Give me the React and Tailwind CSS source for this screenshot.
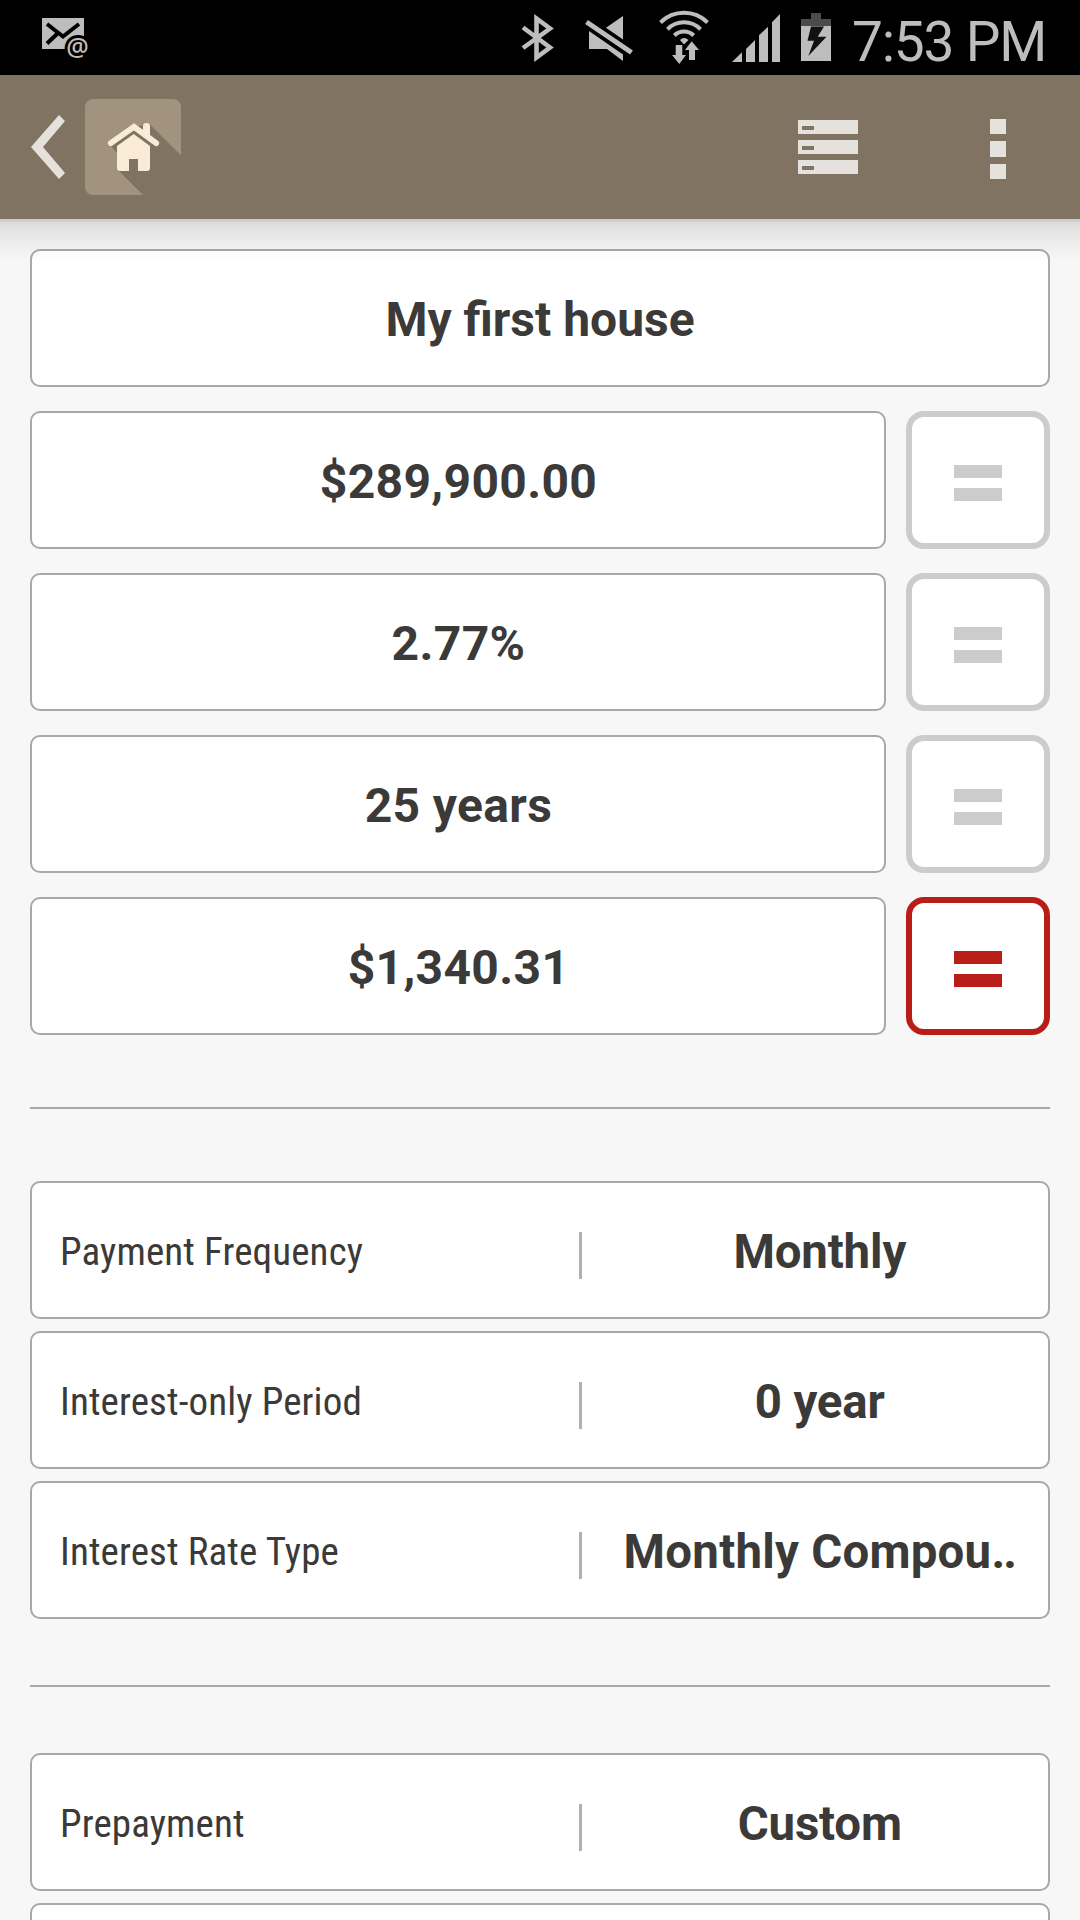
import React from 'react'

const loanFields = [
  { value: '$289,900.00', active: false },
  { value: '2.77%', active: false },
  { value: '25 years', active: false },
  { value: '$1,340.31', active: true },
]

const paymentOptions = [
  { label: 'Payment Frequency', value: 'Monthly' },
  { label: 'Interest-only Period', value: '0 year' },
  { label: 'Interest Rate Type', value: 'Monthly Compou', cut: true },
]

const extraOptions = [
  { label: 'Prepayment', value: 'Custom' },
  { label: '', value: '' },
]

const MailIcon = () => (
  <svg className="w-12 h-[75px]" viewBox="42 0 48 75">
    <rect x="42" y="18" width="42" height="31" fill="#bdbdbd" />
    <path d="M47 24L63 36.5L79 24M47 43.5L57 34" fill="none" stroke="#000" strokeWidth="4" />
    <text x="77.5" y="55.5" textAnchor="middle" fontSize="25" fontFamily="Noto Sans" fontWeight="500" fill="#bdbdbd" stroke="#000" strokeWidth="6" paintOrder="stroke">@</text>
  </svg>
)

const BluetoothIcon = () => (
  <svg className="w-[35px] h-[75px]" viewBox="520 0 35 75">
    <path d="M523 27.5L550 47.5L536.5 57.5V18.5L550 28.5L523 48" fill="none" stroke="#bdbdbd" strokeWidth="4.6" />
  </svg>
)

const MuteIcon = () => (
  <svg className="w-[50px] h-[75px]" viewBox="584 0 50 75" fill="#bdbdbd">
    <path d="M623 16V39.5L606 27.7ZM589 31L623 54.5V61L607 49H589Z" />
    <path d="M586.5 22L631.5 52.5" stroke="#bdbdbd" strokeWidth="5" />
  </svg>
)

const WifiIcon = () => (
  <svg className="w-[52px] h-[75px]" viewBox="658 0 52 75">
    <g fill="none" stroke="#bdbdbd" strokeWidth="4">
      <path d="M660.5 22.5A33 33 0 0 1 707.5 22.5" />
      <path d="M667.5 29.3A23 23 0 0 1 700.5 29.3" />
      <path d="M674.3 35.5A13.7 13.7 0 0 1 693.7 35.5" />
    </g>
    <path d="M680 40Q684 36 688.5 40L684 44.5Z" fill="#bdbdbd" />
    <path d="M675.7 45H682.3V55H686L679.3 64L672 55H675.7ZM689 60H695V50H699L691.7 41.3L685 50H689Z" fill="#bdbdbd" />
  </svg>
)

const SignalIcon = () => (
  <svg className="w-[49px] h-[75px]" viewBox="732 0 49 75" fill="#bdbdbd">
    <path d="M732 62L742 52.3V62ZM746 49L755 40V62H746ZM759 35.3L768 26.7V62H759ZM772 22.3L780 14V62H772Z" />
  </svg>
)

const BatteryIcon = () => (
  <svg className="w-[30px] h-[75px]" viewBox="801 0 30 75">
    <path d="M811 13H821V19H831V26H801V19H811Z" fill="#4b4b4b" />
    <rect x="801" y="26" width="30" height="35" fill="#bdbdbd" />
    <path d="M811 26.5H824L817.7 36.8H826.5L808.3 56L814 40.8H807.5Z" fill="#111" />
  </svg>
)

const BackIcon = () => (
  <svg className="w-[34px] h-16" viewBox="31 115 34 64" fill="#e5e2dd">
    <path d="M59 115L65 121L43 147L65 173L59 179L31 147Z" />
  </svg>
)

const HomeIcon = () => (
  <svg className="w-24 h-24" viewBox="85 99 96 96">
    <rect x="85" y="99" width="96" height="96" rx="8" fill="#a2937e" />
    {/* long shadow */}
    <path d="M150 124.5L182 156.5V196H144L119 171L117 153L109 144L134 127Z" fill="#807361" />
    <path d="M110.8 143.2L134 126.8L156.2 143.2" fill="none" stroke="#faebd7" strokeWidth="5.8" strokeLinecap="round" />
    <path d="M143 134V126Q143 123 146.5 123Q150 123 150 126V139Z" fill="#faebd7" />
    <path d="M133.7 134L150 146V168Q150 171 147 171H138V159H129V171H120Q117 171 117 168V146Z" fill="#faebd7" />
  </svg>
)

const ListIcon = () => (
  <svg className="w-[60px] h-[54px]" viewBox="0 0 60 54">
    <path d="M0 0H60V14H0ZM0 20H60V34H0ZM0 40H60V54H0Z" fill="#e5e2dd" />
    <path d="M4 6H16V10H4ZM4 26H16V30H4ZM4 46H16V50H4Z" fill="#807361" />
  </svg>
)

function StatusBar() {
  return (
    <div className="flex items-center h-[75px] bg-black pl-[42px]">
      <MailIcon />
      <div className="flex items-center ml-[430px]">
        <BluetoothIcon />
        <div className="ml-[29px] flex"><MuteIcon /></div>
        <div className="ml-6 flex"><WifiIcon /></div>
        <div className="ml-[22px] flex"><SignalIcon /></div>
        <div className="ml-5 flex"><BatteryIcon /></div>
        <span className="ml-[21px] pt-[9px] text-[55px] leading-none font-[370] tracking-[-1.2px] text-[#bdbdbd] whitespace-nowrap">7:53 PM</span>
      </div>
    </div>
  )
}

function AppBar() {
  return (
    <div className="relative flex items-center h-36 bg-[#807361] pl-[31px] pr-[74.5px]">
      <BackIcon />
      <div className="ml-5"><HomeIcon /></div>
      <div className="ml-auto"><ListIcon /></div>
      <div className="ml-[132px] mt-1 flex flex-col gap-[7px]">
        <div className="w-[15.5px] h-[15.5px] bg-[#e5e2dd]"></div>
        <div className="w-[15.5px] h-[15.5px] bg-[#e5e2dd]"></div>
        <div className="w-[15.5px] h-[15.5px] bg-[#e5e2dd]"></div>
      </div>
      {/* drop shadow of the bar, it also falls on the first card */}
      <div className="absolute left-0 top-full w-full h-[42px] border-t-[3px] border-black/16 bg-linear-to-b from-black/11 via-black/4 to-transparent"></div>
    </div>
  )
}

function ValueBox({ value, className = 'tracking-[0.35px] pl-px' }) {
  return (
    <div className={`flex-1 h-[138px] flex items-center justify-center pt-[3px] bg-white border-2 border-[#a8a8a8] rounded-[10px] text-5xl font-bold ${className}`}>
      {value}
    </div>
  )
}

function EqualsButton({ active }) {
  return (
    <button className={`w-36 h-[138px] flex flex-col items-center justify-center gap-2.5 pt-1.5 bg-white border-6 rounded-[18px] ${active ? 'border-[#b91d17] text-[#b91d17]' : 'border-[#cccccc] text-[#cccccc]'}`}>
      <span className="w-[47.5px] h-[13px] bg-current"></span>
      <span className="w-[47.5px] h-[13px] bg-current"></span>
    </button>
  )
}

function OptionRow({ label, value, cut }) {
  return (
    <div className="flex items-center h-[138px] shrink-0 bg-white border-2 border-[#a8a8a8] rounded-[10px] pl-7">
      <span className="w-[519px] pt-1 text-[39px] tracking-[0.13px] [font-stretch:75%] whitespace-nowrap">{label}</span>
      <span className="w-[2.5px] h-[47px] mt-[11px] bg-[#b0b0b0]"></span>
      <span className={`flex-1 pt-[3px] pl-[18px] text-center text-[47.4px] leading-12 font-bold whitespace-nowrap ${cut ? 'pr-[9px] tracking-[0.25px]' : 'pr-2 tracking-[-0.15px]'}`}>
        {value}{cut && <span className="tracking-[-2px]">..</span>}
      </span>
    </div>
  )
}

function App() {
  return (
    <div className="w-full h-[1920px] overflow-hidden bg-[#f7f7f7] text-[#3b3a38] font-[Roboto,sans-serif]">
      <StatusBar />
      <AppBar />
      <div className="px-[30px] pt-[30px]">
        <div className="flex flex-col gap-6">
          <div className="flex"><ValueBox value="My first house" className="tracking-normal" /></div>
          {loanFields.map((field) => (
            <div key={field.value} className="flex gap-5">
              <ValueBox value={field.value} />
              <EqualsButton active={field.active} />
            </div>
          ))}
        </div>
        <hr className="mt-18 border-t-2 border-[#a8a8a8]" />
        <div className="mt-18 flex flex-col gap-3">
          {paymentOptions.map((o) => <OptionRow key={o.label} label={o.label} value={o.value} cut={o.cut} />)}
        </div>
        <hr className="mt-[66px] border-t-2 border-[#a8a8a8]" />
        <div className="mt-[66px] flex flex-col gap-3">
          {extraOptions.map((o) => <OptionRow key={o.label} label={o.label} value={o.value} />)}
        </div>
      </div>
    </div>
  )
}

export default App
